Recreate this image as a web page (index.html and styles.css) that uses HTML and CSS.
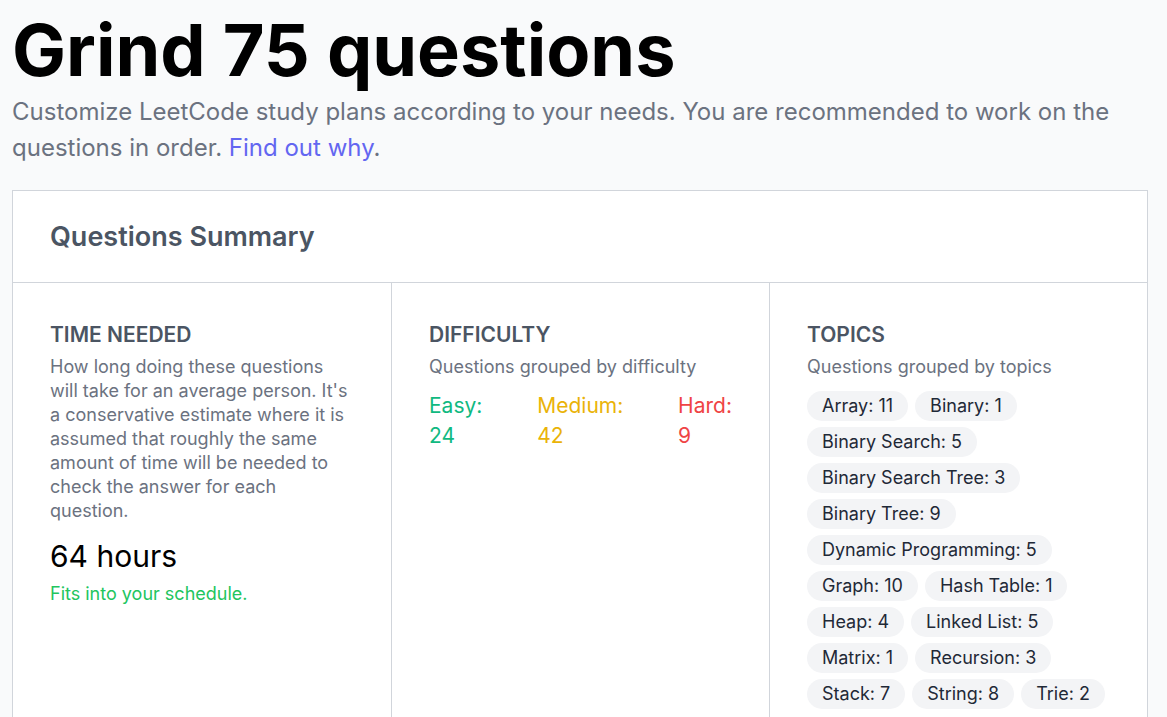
FILE: index.html
```html
<!DOCTYPE html>
<html lang="en">
<head>
    <meta charset="UTF-8">
    <meta name="viewport" content="width=device-width, initial-scale=1.0">
    <title>Grind 75 questions</title>
    <link rel="stylesheet" href="styles.css">
</head>
<body>
    <div class="page">
        <h1 class="title">Grind 75 questions</h1>
        <p class="lead">Customize LeetCode study plans according to your needs. You are recommended to work on the questions in order. <a href="#" class="lead-link">Find out why</a>.</p>

        <div class="card">
            <div class="card-header">
                <h2>Questions Summary</h2>
            </div>
            <div class="card-body">
                <!-- time -->
                <div class="col">
                    <h3 class="col-title">TIME NEEDED</h3>
                    <p class="col-desc">How long doing these questions will take for an average person. It's a conservative estimate where it is assumed that roughly the same amount of time will be needed to check the answer for each question.</p>
                    <div class="hours">64 hours</div>
                    <div class="fits">Fits into your schedule.</div>
                </div>

                <!-- difficulty -->
                <div class="col">
                    <h3 class="col-title">DIFFICULTY</h3>
                    <p class="col-desc">Questions grouped by difficulty</p>
                    <div class="difficulty">
                        <div class="diff easy">Easy:<br>24</div>
                        <div class="diff medium">Medium:<br>42</div>
                        <div class="diff hard">Hard:<br>9</div>
                    </div>
                </div>

                <!-- topics -->
                <div class="col">
                    <h3 class="col-title">TOPICS</h3>
                    <p class="col-desc">Questions grouped by topics</p>
                    <div class="topics">
                        <span class="pill">Array: 11</span>
                        <span class="pill">Binary: 1</span>
                        <span class="pill">Binary Search: 5</span>
                        <span class="pill">Binary Search Tree: 3</span>
                        <span class="pill">Binary Tree: 9</span>
                        <span class="pill">Dynamic Programming: 5</span>
                        <span class="pill">Graph: 10</span>
                        <span class="pill">Hash Table: 1</span>
                        <span class="pill">Heap: 4</span>
                        <span class="pill">Linked List: 5</span>
                        <span class="pill">Matrix: 1</span>
                        <span class="pill">Recursion: 3</span>
                        <span class="pill">Stack: 7</span>
                        <span class="pill">String: 8</span>
                        <span class="pill">Trie: 2</span>
                    </div>
                </div>
            </div>
        </div>
    </div>
</body>
</html>
```

FILE: styles.css
```css
body {
    margin: 0;
    background-color: #f9fafb;
    font-family: Inter, "Noto Sans", sans-serif;
    color: #111827;
}
.page {
    padding: 6px 19px 40px 12px;
}
.title {
    margin: 0;
    font-size: 72px;
    line-height: 88px;
    font-weight: 700;
    color: #000;
}
.lead {
    margin: 0 0 24px;
    font-size: 24px;
    line-height: 36px;
    color: #6b7280;
}
.lead-link {
    color: #6366f1;
    text-decoration: none;
}
.card {
    background-color: #fff;
    border: 1px solid #d1d5db;
}
.card-header {
    padding: 0 37px;
    height: 91px;
    display: flex;
    align-items: center;
    border-bottom: 1px solid #d1d5db;
}
.card-header h2 {
    margin: 0;
    font-size: 27px;
    font-weight: 600;
    color: #4b5563;
}
.card-body {
    display: grid;
    grid-template-columns: repeat(3, 1fr);
}
.col {
    padding: 38px 37px 40px;
    min-height: 500px;
}
.col + .col {
    border-left: 1px solid #d1d5db;
}
.col-title {
    margin: 0 0 6px;
    font-size: 21px;
    line-height: 28px;
    font-weight: 600;
    color: #4b5563;
}
.col-desc {
    margin: 0 0 12px;
    font-size: 18px;
    line-height: 24px;
    color: #6b7280;
}
.hours {
    font-size: 30px;
    line-height: 36px;
    color: #000;
    margin-top: 15px;
}
.fits {
    margin-top: 8px;
    font-size: 18px;
    line-height: 24px;
    color: #22c55e;
}
.difficulty {
    display: flex;
    justify-content: space-between;
}
.diff {
    font-size: 21px;
    line-height: 30px;
}
.easy { color: #10b981; }
.medium { color: #eab308; }
.hard { color: #ef4444; }
.topics {
    display: flex;
    flex-wrap: wrap;
    gap: 6px 7px;
}
.pill {
    background-color: #f3f4f6;
    border-radius: 999px;
    padding: 0 15px;
    height: 30px;
    line-height: 30px;
    font-size: 18px;
    color: #1f2937;
}
```
